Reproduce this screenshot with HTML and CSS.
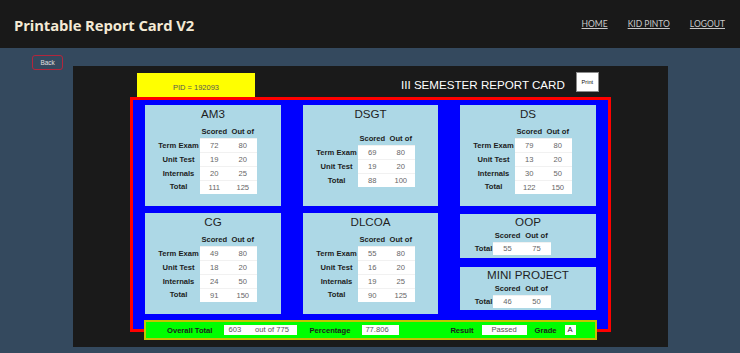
FILE: index.html
```html
<!DOCTYPE html>
<html>
<head>
<meta charset="utf-8">
<title>Printable Report Card V2</title>
<link rel="stylesheet" href="styles.css">
</head>
<body>
<header class="topbar">
  <div class="brand">Printable Report Card V2</div>
  <nav class="nav">
    <a href="#">HOME</a>
    <a href="#">KID PINTO</a>
    <a href="#">LOGOUT</a>
  </nav>
</header>
<main class="main">
  <button class="back">Back</button>
  <section class="sheet">
    <div class="sheet-top">
      <div class="pid">PID = 192093</div>
      <div class="sem">III SEMESTER REPORT CARD</div>
      <button class="print">Print</button>
    </div>
    <div class="frame">
      <div class="grid">
        <div class="card">
          <div class="subj">AM3</div>
          <div class="tbl-wrap">
            <table class="marks">
              <tr><th class="lbl"></th><th>Scored</th><th>Out of</th></tr>
              <tr><th class="lbl">Term Exam</th><td>72</td><td>80</td></tr>
              <tr><th class="lbl">Unit Test</th><td>19</td><td>20</td></tr>
              <tr><th class="lbl">Internals</th><td>20</td><td>25</td></tr>
              <tr><th class="lbl">Total</th><td>111</td><td>125</td></tr>
            </table>
          </div>
        </div>
        <div class="card">
          <div class="subj">DSGT</div>
          <div class="tbl-wrap">
            <table class="marks">
              <tr><th class="lbl"></th><th>Scored</th><th>Out of</th></tr>
              <tr><th class="lbl">Term Exam</th><td>69</td><td>80</td></tr>
              <tr><th class="lbl">Unit Test</th><td>19</td><td>20</td></tr>
              <tr><th class="lbl">Total</th><td>88</td><td>100</td></tr>
            </table>
          </div>
        </div>
        <div class="card">
          <div class="subj">DS</div>
          <div class="tbl-wrap">
            <table class="marks">
              <tr><th class="lbl"></th><th>Scored</th><th>Out of</th></tr>
              <tr><th class="lbl">Term Exam</th><td>79</td><td>80</td></tr>
              <tr><th class="lbl">Unit Test</th><td>13</td><td>20</td></tr>
              <tr><th class="lbl">Internals</th><td>30</td><td>50</td></tr>
              <tr><th class="lbl">Total</th><td>122</td><td>150</td></tr>
            </table>
          </div>
        </div>
        <div class="card">
          <div class="subj">CG</div>
          <div class="tbl-wrap">
            <table class="marks">
              <tr><th class="lbl"></th><th>Scored</th><th>Out of</th></tr>
              <tr><th class="lbl">Term Exam</th><td>49</td><td>80</td></tr>
              <tr><th class="lbl">Unit Test</th><td>18</td><td>20</td></tr>
              <tr><th class="lbl">Internals</th><td>24</td><td>50</td></tr>
              <tr><th class="lbl">Total</th><td>91</td><td>150</td></tr>
            </table>
          </div>
        </div>
        <div class="card">
          <div class="subj">DLCOA</div>
          <div class="tbl-wrap">
            <table class="marks">
              <tr><th class="lbl"></th><th>Scored</th><th>Out of</th></tr>
              <tr><th class="lbl">Term Exam</th><td>55</td><td>80</td></tr>
              <tr><th class="lbl">Unit Test</th><td>16</td><td>20</td></tr>
              <tr><th class="lbl">Internals</th><td>19</td><td>25</td></tr>
              <tr><th class="lbl">Total</th><td>90</td><td>125</td></tr>
            </table>
          </div>
        </div>
        <div class="stack">
          <div class="card small">
            <div class="subj">OOP</div>
            <table class="marks mini">
              <tr><th class="lbl"></th><th>Scored</th><th>Out of</th></tr>
              <tr><th class="lbl">Total</th><td>55</td><td>75</td></tr>
            </table>
          </div>
          <div class="card small">
            <div class="subj">MINI PROJECT</div>
            <table class="marks mini">
              <tr><th class="lbl"></th><th>Scored</th><th>Out of</th></tr>
              <tr><th class="lbl">Total</th><td>46</td><td>50</td></tr>
            </table>
          </div>
        </div>
      </div>
      <div class="summary">
        <span class="s-lbl first">Overall Total</span>
        <span class="s-box total"><span>603</span><span>out of 775</span></span>
        <span class="s-lbl">Percentage</span>
        <span class="s-box pct">77.806</span>
        <span class="s-lbl result">Result</span>
        <span class="s-box passed">Passed</span>
        <span class="s-lbl">Grade</span>
        <span class="s-box grade">A</span>
      </div>
    </div>
  </section>
</main>
</body>
</html>
```

FILE: styles.css
```css
* { box-sizing: border-box; }
html, body {
  margin: 0;
  padding: 0;
  background: #34495e;
}
body {
  font-family: "Liberation Sans", Arial, sans-serif;
}

/* header */
.topbar {
  height: 48px;
  background: #191919;
  display: flex;
  align-items: center;
  justify-content: space-between;
  padding: 0 15px 0 14px;
}
.brand {
  font-family: "Open Sans", sans-serif;
  font-weight: 700;
  font-size: 14.8px;
  color: #f4ead5;
  letter-spacing: -0.1px;
  padding-top: 1px;
}
.nav {
  display: flex;
  gap: 20px;
}
.nav a {
  font-family: Lato, sans-serif;
  font-size: 8.5px;
  color: #c8c8c8;
  text-decoration: underline;
  text-underline-offset: 1px;
}

/* main area */
.main {
  display: flex;
  align-items: flex-start;
}
.back {
  margin: 7px 0 0 32px;
  width: 31px;
  height: 15px;
  padding: 0;
  background: transparent;
  border: 1px solid #b3263c;
  border-radius: 3px;
  color: #e0e0e0;
  font-family: "Liberation Sans", Arial, sans-serif;
  font-size: 6.4px;
}
.sheet {
  margin: 18px 0 0 10px;
  width: 595px;
  background: #1a1a1a;
  padding-bottom: 15px;
}
.sheet-top {
  height: 31px;
  display: flex;
  align-items: flex-start;
}
.pid {
  margin: 7px 0 0 64px;
  width: 118px;
  height: 24px;
  background: #ffff00;
  color: #555;
  font-size: 7.5px;
  text-align: center;
  line-height: 24px;
  padding-top: 3px;
}
.sem {
  margin: 12px 0 0 146px;
  color: #fff;
  font-size: 11.6px;
  line-height: 13px;
}
.print {
  margin: 6px 0 0 11px;
  width: 23px;
  height: 20px;
  padding: 0;
  background: #fff;
  border: 1.5px solid #8a8a8a;
  color: #111;
  font-family: "Liberation Sans", Arial, sans-serif;
  font-size: 5.6px;
}

/* red frame */
.frame {
  margin-left: 57px;
  width: 481px;
  height: 235px;
  border: 3px solid #ff0000;
  background: #0000ff;
}
.grid {
  display: grid;
  grid-template-columns: 136px 135px 136px;
  grid-template-rows: 101px 101px;
  column-gap: 22px;
  row-gap: 7px;
  padding: 5px 12px 0;
}
.card {
  background: #add8e6;
  display: flex;
  flex-direction: column;
  padding-top: 2px;
}
.subj {
  text-align: center;
  font-size: 11.6px;
  line-height: 14px;
  color: #1e1e1e;
}
.tbl-wrap {
  flex: 1;
  display: flex;
  align-items: center;
  padding: 0 0 8px 12px;
}
.marks {
  border-collapse: collapse;
  font-size: 7.6px;
}
.marks th {
  font-weight: 700;
  color: #1c1c1c;
  padding: 0;
  height: 13.7px;
  text-align: center;
}
.marks th.lbl { width: 43px; }
.marks td {
  background: #fff;
  color: #666;
  width: 28.5px;
  height: 13.7px;
  padding: 0;
  text-align: center;
  border-top: 1px solid #f1f1f1;
}
.stack {
  display: flex;
  flex-direction: column;
  gap: 9px;
  padding-top: 1px;
}
.card.small {
  height: 44px;
  padding-top: 1px;
}
.card.small + .card.small { height: 43px; }
.marks.mini {
  margin-left: 14px;
  align-self: flex-start;
  width: 77px;
  table-layout: fixed;
}
.marks.mini th { height: 13px; }
.marks.mini td { height: 13px; width: 29px; }
.marks.mini th.lbl { width: 19px; }

/* summary bar */
.summary {
  margin: 6px auto 0;
  width: 453px;
  height: 20px;
  background: #00ff00;
  border: 2px solid #c4c400;
  display: flex;
  align-items: center;
  font-size: 7.6px;
}
.s-lbl {
  font-weight: 700;
  color: #1c1c1c;
  margin-left: 12px;
}
.s-lbl.first { margin-left: 21px; }
.s-lbl.result { margin-left: 51px; }
.s-box {
  background: #fff;
  color: #555;
  height: 9.5px;
  line-height: 9.5px;
  margin-left: 12px;
}
.s-box.total {
  width: 73px;
  display: flex;
  gap: 14px;
  padding-left: 4px;
}
.s-box.pct { width: 37px; padding-left: 3px; }
.s-box.passed { width: 45px; text-align: center; margin-left: 8px; }
.s-box.grade { width: 11px; text-align: center; color: #222; margin-left: 8px; }
.passed + .s-lbl { margin-left: 8px; }
```
